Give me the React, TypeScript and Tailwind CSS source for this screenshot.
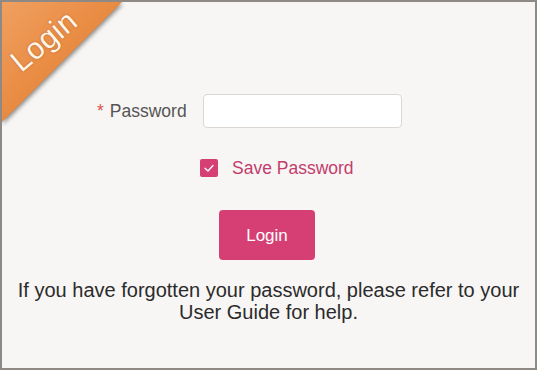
import React from "react";

export default function App() {
  return (
    <div
      className="relative w-[537px] h-[370px] overflow-hidden border-2 border-[#8e8984] bg-[#f8f6f4]"
      style={{ fontFamily: '"Liberation Sans", Arial, sans-serif' }}
    >
      {/* corner ribbon */}
      <div className="absolute left-0 top-0 w-[120px] h-[120px] drop-shadow-[1px_2px_2px_rgba(0,0,0,0.45)]">
        <div className="w-full h-full [clip-path:polygon(0_0,100%_0,0_100%)] bg-[linear-gradient(135deg,#f0a060_0%,#e98c44_45%,#d27230_100%)]" />
      </div>
      <div className="absolute left-[-4px] top-[24px] w-[92px] text-center text-[30px] leading-none tracking-[0.5px] text-[#fff6ea] -rotate-[40deg] [text-shadow:0_0_2px_rgba(120,50,0,0.5)]">
        Login
      </div>

      <div className="flex flex-col pt-[92px]">
        <div className="flex items-center ml-[95px]">
          <label className="text-[17.5px] text-[#555]">
            <span className="text-[#d9534f] mr-[6px]">*</span>Password
          </label>
          <input
            type="password"
            className="ml-[16px] w-[199px] h-[34px] rounded-[4px] border border-[#dcd6d2] bg-white outline-none"
          />
        </div>

        <div className="flex items-center ml-[198px] mt-[27px]">
          <span className="flex items-center justify-center w-[18px] h-[18px] rounded-[2px] bg-[#d63f74]">
            <svg width="14" height="14" viewBox="0 0 14 14" fill="none">
              <path d="M3 7.2 L6 10 L11 4.5" stroke="white" strokeWidth="1.3" strokeLinecap="round" strokeLinejoin="round" />
            </svg>
          </span>
          <span className="ml-[14px] text-[17.5px] text-[#c23d6d]">Save Password</span>
        </div>

        <button className="ml-[217px] mt-[29px] w-[96px] h-[50px] rounded-[4px] bg-[#d63f74] text-white text-[17px]">
          Login
        </button>

        <p className="mt-[19px] text-center text-[20px] leading-[22px] text-[#2b2b2b]">
          If you have forgotten your password, please refer to your
          <br />
          User Guide for help.
        </p>
      </div>
    </div>
  );
}
